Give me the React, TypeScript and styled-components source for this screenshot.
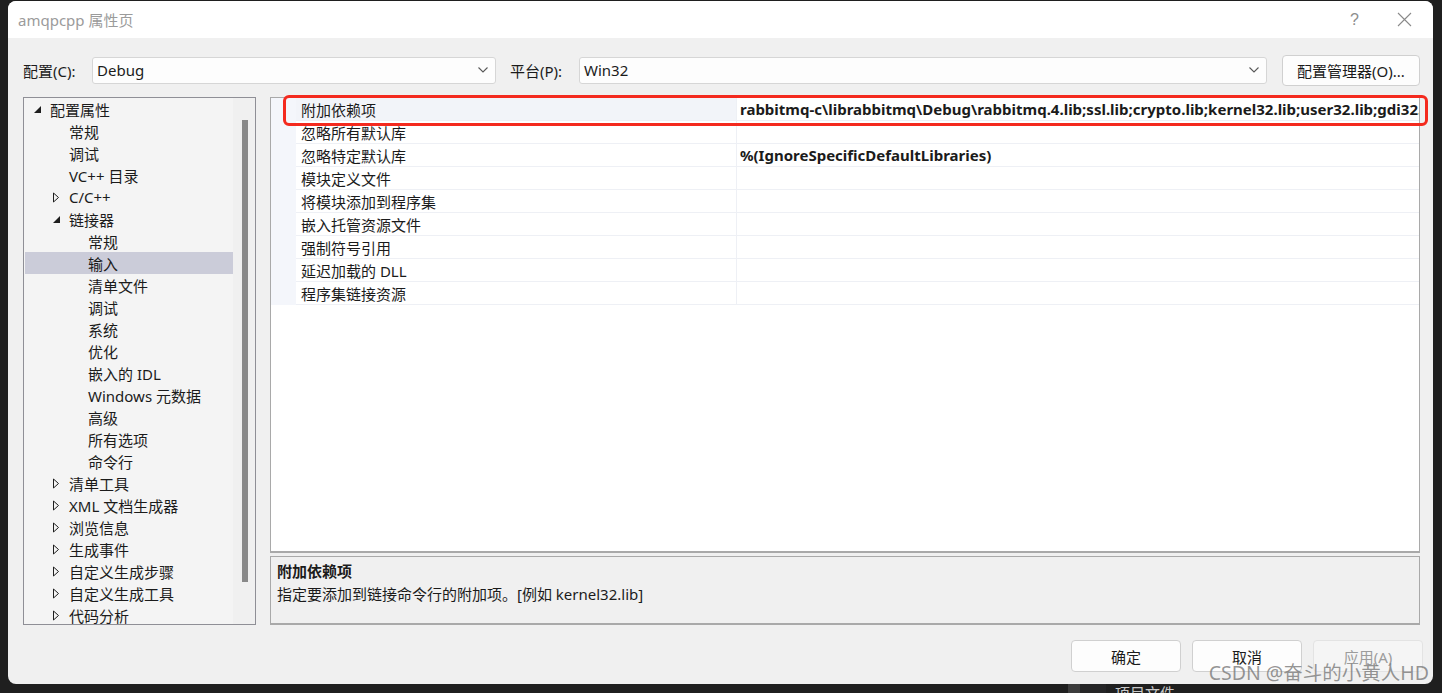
import styled, { createGlobalStyle } from 'styled-components'

const GlobalStyle = createGlobalStyle`
  html, body {
    margin: 0;
    padding: 0;
    background: #1f1f1f;
  }
  body {
    font-family: "Noto Sans", "Noto Sans CJK SC", sans-serif;
    color: #1b1b1b;
  }
`

const Screen = styled.div`
  width: 1442px;
  height: 693px;
  box-sizing: border-box;
  padding: 1px 0 0 8px;
  background: #1f1f1f;
  position: relative;
  overflow: hidden;
  display: flex;
  flex-direction: column;
`

const Dialog = styled.div`
  width: 1425px;
  height: 683px;
  flex: none;
  background: #f0f0f0;
  border-radius: 8px;
  overflow: hidden;
  display: flex;
  flex-direction: column;
`

const TitleBar = styled.div`
  height: 37px;
  flex: none;
  background: #ffffff;
  display: flex;
  align-items: center;
  padding: 0 0 0 10px;
`

const Title = styled.div`
  font-size: 15px;
  color: #9b9b9b;
  flex: 1;
`

const TitleControls = styled.div`
  display: flex;
  align-items: center;
  gap: 38px;
  padding-right: 21px;
  color: #8a8a8a;
`

const HelpMark = styled.span`
  font-size: 16px;
  font-family: "Liberation Sans", sans-serif;
  color: #8d8d8d;
`

const Body = styled.div`
  flex: 1;
  min-width: 0;
  display: flex;
  flex-direction: column;
  padding: 17px 13px 0 15px;
`

const ConfigRow = styled.div`
  display: flex;
  align-items: center;
  height: 31px;
`

const FieldLabel = styled.div<{ $gap?: number }>`
  width: 69px;
  flex: none;
  font-size: 15px;
  margin-left: ${p => p.$gap ?? 0}px;
`

const Select = styled.div<{ $width?: number }>`
  box-sizing: border-box;
  height: 27px;
  ${p => (p.$width ? `width: ${p.$width}px; flex: none;` : 'flex: 1;')}
  background: #fdfdfd;
  border: 1px solid #d6d6d6;
  border-radius: 3px;
  display: flex;
  align-items: center;
  justify-content: space-between;
  padding: 0 6px 1px 4px;
  font-size: 15px;
`

const Button = styled.div<{ $width?: number; $height?: number; $gap?: number; $disabled?: boolean }>`
  box-sizing: border-box;
  height: ${p => p.$height ?? 32}px;
  width: ${p => p.$width ?? 110}px;
  margin-left: ${p => p.$gap ?? 0}px;
  flex: none;
  background: ${p => (p.$disabled ? '#f5f5f5' : '#fdfdfd')};
  border: 1px solid ${p => (p.$disabled ? '#e3e3e3' : '#d0d0d0')};
  border-radius: 4px;
  display: flex;
  align-items: center;
  justify-content: center;
  font-size: 15px;
  color: ${p => (p.$disabled ? '#9c9c9c' : '#1b1b1b')};
`

const Main = styled.div`
  margin-top: 11px;
  height: 528px;
  display: flex;
  gap: 14px;
  min-width: 0;
`

const TreePanel = styled.div`
  width: 233px;
  flex: none;
  box-sizing: border-box;
  border: 1px solid #8f8f96;
  background: #f4f4f4;
  display: flex;
  overflow: hidden;
`

const TreeList = styled.div`
  flex: 1;
  padding: 0 0 0 1px;
  overflow: hidden;
`

const TreeRow = styled.div<{ $level: number; $selected?: boolean }>`
  height: 22px;
  display: flex;
  align-items: center;
  padding-left: ${p => 8 + p.$level * 19}px;
  background: ${p => (p.$selected ? '#cbccd9' : 'transparent')};
  font-size: 15px;
  white-space: nowrap;
`

const Arrow = styled.span`
  width: 17px;
  flex: none;
  display: flex;
  align-items: center;
`

const ScrollTrack = styled.div`
  width: 22px;
  flex: none;
  background: #f0f0f0;
  display: flex;
  justify-content: center;
  padding-top: 22px;
  box-sizing: border-box;
`

const ScrollThumb = styled.div`
  width: 6px;
  height: 462px;
  background: #898989;
  margin-left: 1px;
`

const RightColumn = styled.div`
  flex: 1;
  min-width: 0;
  display: flex;
  flex-direction: column;
  gap: 3px;
`

const GridPanel = styled.div`
  position: relative;
  height: 456px;
  box-sizing: border-box;
  border: 1px solid #a9a9a9;
  border-bottom-width: 2px;
  background: #ffffff;
`

const GridClip = styled.div`
  height: 100%;
  overflow: hidden;
`

const GridRow = styled.div`
  height: 23px;
  display: flex;
  min-width: 0;
`

const Gutter = styled.div`
  width: 25px;
  flex: none;
  background: #f4f6fb;
`

const NameCell = styled.div<{ $active?: boolean }>`
  width: 441px;
  flex: none;
  box-sizing: border-box;
  padding-left: 5px;
  display: flex;
  align-items: center;
  font-size: 15px;
  background: ${p => (p.$active ? '#f2f4f9' : '#ffffff')};
  border-bottom: 1px solid #eef0f5;
  border-right: 1px solid #eef0f5;
`

const ValueCell = styled.div`
  flex: 1;
  min-width: 0;
  box-sizing: border-box;
  padding-left: 3px;
  display: flex;
  align-items: center;
  font-size: 15px;
  font-weight: 700;
  white-space: nowrap;
  overflow: hidden;
  border-bottom: 1px solid #eef0f5;
`

const Highlight = styled.div`
  position: absolute;
  left: 12px;
  top: -3px;
  width: 1145px;
  height: 31px;
  box-sizing: border-box;
  border: 3px solid #f42a1e;
  border-radius: 6px;
  pointer-events: none;
`

const DescPanel = styled.div`
  height: 69px;
  box-sizing: border-box;
  border: 1px solid #a9a9a9;
  border-bottom-width: 2px;
  background: #f0f0f0;
  padding: 3px 6px;
`

const DescTitle = styled.div`
  font-size: 15px;
  font-weight: 700;
  line-height: 22px;
`

const DescText = styled.div`
  font-size: 15px;
  line-height: 24px;
`

const Footer = styled.div`
  margin-top: 15px;
  display: flex;
  justify-content: flex-end;
  gap: 11px;
  margin-right: -3px;
`

const Backdrop = styled.div`
  height: 9px;
  margin-left: -8px;
  display: flex;
  align-items: flex-start;
  overflow: hidden;
  color: #c8c8c8;
  font-size: 15px;
  line-height: 15px;
`

const BackdropBlock = styled.div<{ $w: number; $c: string }>`
  width: ${p => p.$w}px;
  height: 9px;
  flex: none;
  background: ${p => p.$c};
`

const BackdropText = styled.span`
  margin-left: 9px;
  margin-top: 2px;
`

const Watermark = styled.div`
  position: absolute;
  right: 13px;
  bottom: 7px;
  font-size: 19.5px;
  color: rgba(120, 120, 120, 0.78);
  pointer-events: none;
`

const Chevron = () => (
  <svg width="12" height="8" viewBox="0 0 12 8">
    <path d="M1.5 1.5 L6 6 L10.5 1.5" fill="none" stroke="#5a5a5a" strokeWidth="1.1" />
  </svg>
)

const CloseIcon = () => (
  <svg width="15" height="15" viewBox="0 0 15 15">
    <path d="M1 1 L14 14 M14 1 L1 14" stroke="#8a8a8a" strokeWidth="1.1" />
  </svg>
)

const Expanded = () => (
  <svg width="9" height="9" viewBox="0 0 9 9">
    <polygon points="8,1 8,8 1,8" fill="#1e1e1e" />
  </svg>
)

const Collapsed = () => (
  <svg width="8" height="11" viewBox="0 0 8 11">
    <polygon points="1.5,1 6.5,5.5 1.5,10" fill="none" stroke="#1e1e1e" strokeWidth="1" />
  </svg>
)

type TreeItem = { label: string; level: number; state?: 'open' | 'closed'; selected?: boolean }

const tree: TreeItem[] = [
  { label: '配置属性', level: 0, state: 'open' },
  { label: '常规', level: 1 },
  { label: '调试', level: 1 },
  { label: 'VC++ 目录', level: 1 },
  { label: 'C/C++', level: 1, state: 'closed' },
  { label: '链接器', level: 1, state: 'open' },
  { label: '常规', level: 2 },
  { label: '输入', level: 2, selected: true },
  { label: '清单文件', level: 2 },
  { label: '调试', level: 2 },
  { label: '系统', level: 2 },
  { label: '优化', level: 2 },
  { label: '嵌入的 IDL', level: 2 },
  { label: 'Windows 元数据', level: 2 },
  { label: '高级', level: 2 },
  { label: '所有选项', level: 2 },
  { label: '命令行', level: 2 },
  { label: '清单工具', level: 1, state: 'closed' },
  { label: 'XML 文档生成器', level: 1, state: 'closed' },
  { label: '浏览信息', level: 1, state: 'closed' },
  { label: '生成事件', level: 1, state: 'closed' },
  { label: '自定义生成步骤', level: 1, state: 'closed' },
  { label: '自定义生成工具', level: 1, state: 'closed' },
  { label: '代码分析', level: 1, state: 'closed' },
]

const props: { name: string; value?: string }[] = [
  {
    name: '附加依赖项',
    value:
      'rabbitmq-c\\librabbitmq\\Debug\\rabbitmq.4.lib;ssl.lib;crypto.lib;kernel32.lib;user32.lib;gdi32.lib;winspool.lib;comdlg32.lib',
  },
  { name: '忽略所有默认库' },
  { name: '忽略特定默认库', value: '%(IgnoreSpecificDefaultLibraries)' },
  { name: '模块定义文件' },
  { name: '将模块添加到程序集' },
  { name: '嵌入托管资源文件' },
  { name: '强制符号引用' },
  { name: '延迟加载的 DLL' },
  { name: '程序集链接资源' },
]

export default function App() {
  return (
    <Screen>
      <GlobalStyle />
      <Dialog>
        <TitleBar>
          <Title>amqpcpp 属性页</Title>
          <TitleControls>
            <HelpMark>?</HelpMark>
            <CloseIcon />
          </TitleControls>
        </TitleBar>

        <Body>
          <ConfigRow>
            <FieldLabel>配置(C):</FieldLabel>
            <Select $width={404}>
              <span>Debug</span>
              <Chevron />
            </Select>
            <FieldLabel $gap={14}>平台(P):</FieldLabel>
            <Select>
              <span>Win32</span>
              <Chevron />
            </Select>
            <Button $width={138} $height={31} $gap={15}>
              配置管理器(O)...
            </Button>
          </ConfigRow>

          <Main>
            <TreePanel>
              <TreeList>
                {tree.map((item, i) => (
                  <TreeRow key={i} $level={item.level} $selected={item.selected}>
                    <Arrow>
                      {item.state === 'open' && <Expanded />}
                      {item.state === 'closed' && <Collapsed />}
                    </Arrow>
                    {item.label}
                  </TreeRow>
                ))}
              </TreeList>
              <ScrollTrack>
                <ScrollThumb />
              </ScrollTrack>
            </TreePanel>

            <RightColumn>
              <GridPanel>
                <GridClip>
                  {props.map((p, i) => (
                    <GridRow key={i}>
                      <Gutter />
                      <NameCell $active={i === 0}>{p.name}</NameCell>
                      <ValueCell>{p.value}</ValueCell>
                    </GridRow>
                  ))}
                </GridClip>
                <Highlight />
              </GridPanel>
              <DescPanel>
                <DescTitle>附加依赖项</DescTitle>
                <DescText>指定要添加到链接命令行的附加项。[例如 kernel32.lib]</DescText>
              </DescPanel>
            </RightColumn>
          </Main>

          <Footer>
            <Button>确定</Button>
            <Button>取消</Button>
            <Button $disabled>应用(A)</Button>
          </Footer>
        </Body>
      </Dialog>
      <Backdrop>
        <BackdropBlock $w={1068} $c="#1f1f1f" />
        <BackdropBlock $w={12} $c="#3c3c3c" />
        <BackdropBlock $w={26} $c="#252526" />
        <BackdropText>项目文件</BackdropText>
      </Backdrop>
      <Watermark>CSDN @奋斗的小黄人HD</Watermark>
    </Screen>
  )
}
